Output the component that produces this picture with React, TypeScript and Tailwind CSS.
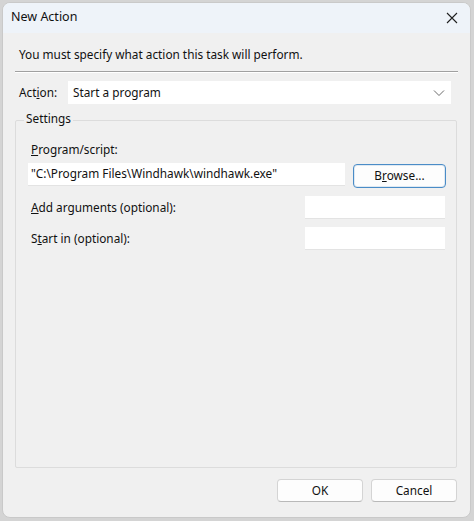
import React from 'react';

const font = { fontFamily: '"Segoe UI", "Noto Sans", "Liberation Sans", sans-serif' };

function Field({ value, className }: { value?: string; className: string }) {
  return (
    <div className={`bg-white border-b border-[#e3e3e3] flex items-center px-[3px] text-[#111] ${className}`}>
      {value}
    </div>
  );
}

function Btn({ children, focused }: { children: React.ReactNode; focused?: boolean }) {
  return (
    <button
      className={`bg-[#fdfdfd] rounded-[4px] text-[11.8px] text-[#111] flex items-center justify-center ${
        focused ? 'border-[1.5px] border-[#4a8cc7] shadow-[inset_0_0_0_1px_#dfe9f2]' : 'border border-[#d4d4d4] border-b-[#b9b9b9]'
      }`}
    >
      {children}
    </button>
  );
}

export default function App() {
  return (
    <div className="w-[474px] h-[521px] bg-[#d4d4d4] pl-[2px] pt-[2px] pr-[3px] pb-[3px]" style={font}>
      <div className="h-full flex flex-col bg-[#f0f0f0] rounded-[8px] border border-[#c9c9c9] overflow-hidden">
        {/* title bar */}
        <div className="h-[30px] shrink-0 bg-[#eef3f9] flex items-center justify-between pl-[8px] pr-[12px]">
          <span className="text-[12.5px] text-[#111] -mt-[2px]">New Action</span>
          <svg width="12" height="12" viewBox="0 0 12 12" className="text-[#202020]">
            <path d="M1 1L11 11M11 1L1 11" stroke="currentColor" strokeWidth="1.1" />
          </svg>
        </div>

        <div className="flex-1 flex flex-col px-[12px] text-[11.8px] text-[#111]">
          <p className="pl-[4px] pt-[13px] h-[38px] leading-[16px]">You must specify what action this task will perform.</p>
          <div className="h-[2px] border-t border-[#a0a0a0] border-b border-b-white" />

          <div className="flex items-center mt-[8px] h-[23px]">
            <span className="pl-[4px] w-[53px]">
              Act<u>i</u>on:
            </span>
            <div className="flex-1 mr-[7px] h-[23px] bg-white flex items-center justify-between pl-[5px] pr-[6px]">
              <span>Start a program</span>
              <svg width="12" height="8" viewBox="0 0 12 8">
                <path d="M1 1.5L6 6.5L11 1.5" fill="none" stroke="#6a6a6a" strokeWidth="1" />
              </svg>
            </div>
          </div>

          {/* settings group */}
          <div className="relative mt-[16px] mr-[1px] flex-1 mb-[11px] border border-[#dcdcdc] rounded-[2px] px-[12px] pt-[20px]">
            <span className="absolute -top-[11px] left-[8px] px-[2px] bg-[#f0f0f0] leading-[16px]">Settings</span>
            <div className="leading-[16px] pl-[3px]">
              <u>P</u>rogram/script:
            </div>
            <div className="flex items-start mt-[6px] h-[25px]">
              <Field value={'"C:\\Program Files\\Windhawk\\windhawk.exe"'} className="w-[319px] h-[23px]" />
              <div className="ml-[8px] mt-[1px] w-[91px] h-[24px] flex">
                <Btn focused>
                  <span className="w-[91px]">
                    B<u>r</u>owse...
                  </span>
                </Btn>
              </div>
            </div>
            <div className="flex items-center justify-between mt-[8px] h-[23px]">
              <span className="pl-[3px]">
                <u>A</u>dd arguments (optional):
              </span>
              <Field className="w-[140px] h-[23px] mr-[-1px]" />
            </div>
            <div className="flex items-center justify-between mt-[8px] h-[23px]">
              <span className="pl-[3px]">
                S<u>t</u>art in (optional):
              </span>
              <Field className="w-[140px] h-[23px] mr-[-1px]" />
            </div>
          </div>

          <div className="flex justify-end gap-[10px] pr-[3px] mb-[15px]">
            <div className="w-[84px] h-[23px] flex">
              <Btn>
                <span className="w-[84px]">OK</span>
              </Btn>
            </div>
            <div className="w-[84px] h-[23px] flex">
              <Btn>
                <span className="w-[84px]">Cancel</span>
              </Btn>
            </div>
          </div>
        </div>
      </div>
    </div>
  );
}
